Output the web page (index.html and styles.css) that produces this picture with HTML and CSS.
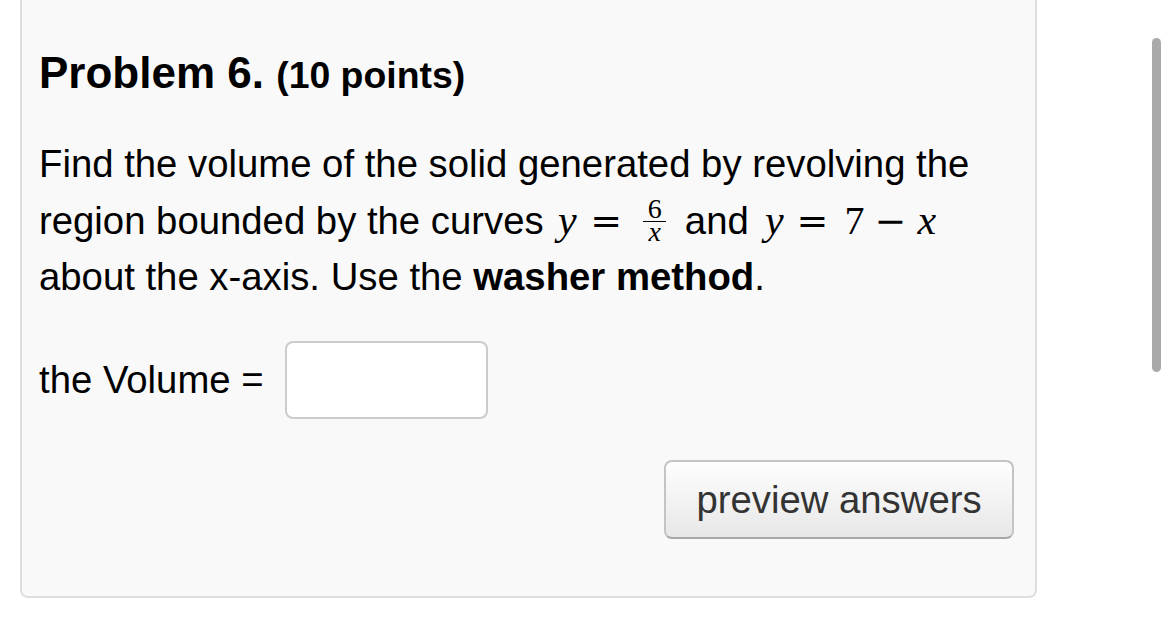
FILE: index.html
```html
<!DOCTYPE html>
<html>
<head>
<meta charset="utf-8">
<link rel="stylesheet" href="styles.css">
</head>
<body>
<div class="page">
  <div class="card">
    <h3 class="title">Problem 6. <span class="points">(10 points)</span></h3>
    <p class="problem">Find the volume of the solid generated by revolving the region bounded by the curves <span class="math"><span class="tok mi w-y">y</span><span class="tok mo w-eq m-eq1">=</span><span class="frac"><span class="num">6</span><span class="den mi">x</span></span></span> and <span class="math"><span class="tok mi w-y m-y2">y</span><span class="tok mo w-eq m-eq2">=</span><span class="tok mn w-7">7</span><span class="tok mo w-minus">−</span><span class="tok mi w-x">x</span></span> about the x-axis. Use the <b>washer method</b>.</p>
    <div class="answer-row">
      <span class="answer-label">the Volume =</span>
      <input class="answer-input" type="text">
    </div>
    <div class="actions">
      <button class="preview-btn">preview answers</button>
    </div>
  </div>
  <div class="scrollbar"></div>
</div>
</body>
</html>
```
FILE: styles.css
```css
html, body {
  margin: 0;
  padding: 0;
  background: #ffffff;
}
body {
  font-family: "Liberation Sans", Arial, Helvetica, sans-serif;
  color: #000;
  width: 1170px;
  height: 621px;
  overflow: hidden;
}
.page {
  position: relative;
  height: 621px;
  padding: 0 0 0 20px;
}
.card {
  width: 1017px;
  box-sizing: border-box;
  background: #f9f9f9;
  border: 2px solid #dedede;
  border-top: none;
  border-radius: 0 0 8px 8px;
  padding: 48px 21px 57px 17px;
}
.title {
  margin: 0;
  font-size: 44px;
  line-height: 50px;
  font-weight: bold;
}
.points {
  font-size: 37.4px;
}
.problem {
  margin: 36px 0 0 0;
  font-size: 38.3px;
  line-height: 56px;
}
.problem b {
  font-weight: bold;
}
.math {
  white-space: nowrap;
}
.tok {
  display: inline-block;
  text-align: center;
  font-family: "Liberation Serif", "Times New Roman", serif;
  font-size: 42px;
}
.mi {
  font-style: italic;
  font-family: "Liberation Serif", "Times New Roman", serif;
}
.mo {
  font-family: "DejaVu Serif", serif;
  font-size: 38px;
}
.mn {
  font-size: 40px;
}
.w-y { width: 26px; }
.w-eq { width: 27px; }
.w-7 { width: 17px; margin-left: 21px; }
.w-minus { width: 24px; margin-left: 13px; }
.w-x { width: 25px; margin-left: 16px; }
.m-eq1 { margin-left: 10px; }
.m-eq2 { margin-left: 9px; }
.m-y2 { margin-left: 2px; }
.frac {
  display: inline-block;
  vertical-align: -7px;
  width: 23px;
  margin: 0 8px 0 26px;
  text-align: center;
  font-family: "Liberation Serif", "Times New Roman", serif;
  font-size: 28px;
}
.num {
  display: block;
  line-height: 22px;
  padding-bottom: 1px;
  border-bottom: 1.5px solid #000;
}
.den {
  display: block;
  line-height: 20px;
}
.answer-row {
  display: flex;
  align-items: center;
  margin-top: 36px;
}
.answer-label {
  font-size: 38.3px;
  line-height: 56px;
}
.answer-input {
  margin-left: 21px;
  width: 203px;
  height: 78px;
  box-sizing: border-box;
  border: 2px solid #cccccc;
  border-radius: 8px;
  background: #ffffff;
  outline: none;
}
.actions {
  display: flex;
  justify-content: flex-end;
  margin-top: 41px;
}
.preview-btn {
  width: 350px;
  height: 79px;
  box-sizing: border-box;
  border: 2px solid #c4c4c4;
  border-bottom-color: #a8a8a8;
  border-radius: 8px;
  background: linear-gradient(#fefefe, #e7e7e7);
  box-shadow: inset 0 1px 0 rgba(255,255,255,0.8);
  font-family: "Liberation Sans", Arial, Helvetica, sans-serif;
  font-size: 38.3px;
  color: #333333;
  padding: 0;
  line-height: 75px;
}
.scrollbar {
  position: absolute;
  left: 1152px;
  top: 38px;
  width: 9px;
  height: 334px;
  border-radius: 5px;
  background: #a9a9a9;
}
```
